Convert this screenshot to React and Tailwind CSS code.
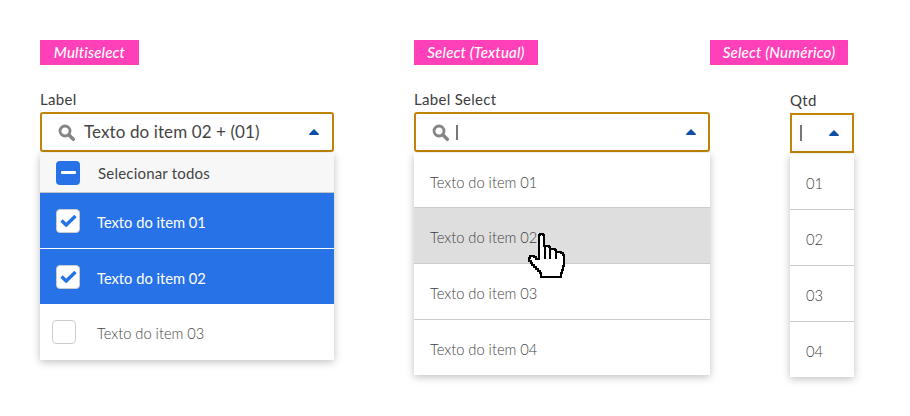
import React from 'react'

const font = "font-['Lato','Open_Sans',sans-serif]"

function Tag({ children, className }) {
  return (
    <div className={`h-[25px] flex items-center justify-center bg-[#ff40b8] text-white italic font-medium text-[15px] tracking-[0.2px] ${className}`}>
      {children}
    </div>
  )
}

function SearchIcon() {
  return (
    <svg width="17" height="17" viewBox="0 0 17 17" fill="none" className="shrink-0">
      <circle cx="7" cy="7" r="5" stroke="#858585" strokeWidth="2.8" />
      <path d="M10.8 10.8 L15.3 15.3" stroke="#858585" strokeWidth="3.4" strokeLinecap="round" />
    </svg>
  )
}

function Caret() {
  return (
    <svg width="10" height="6" viewBox="0 0 10 6" className="shrink-0">
      <path d="M5 0 L10 5 Q10 6 9 6 H1 Q0 6 0 5 Z" fill="#0f4fa8" />
    </svg>
  )
}

function Box({ checked }) {
  return (
    <div className="w-6 h-6 rounded-[4px] bg-white border border-[#cccccc] flex items-center justify-center">
      {checked && (
        <svg width="17" height="13" viewBox="0 0 17 13" fill="none">
          <path d="M1.5 6.5 L6.2 11 L15.5 2" stroke="#2872e8" strokeWidth="3.4" />
        </svg>
      )}
    </div>
  )
}

function CheckRow({ text, checked }) {
  return (
    <div className={`flex items-center ${checked ? 'h-[55px] bg-[#2872e8] text-white pl-4' : 'h-14 bg-white text-[#444444] pl-3'}`}>
      <Box checked={checked} />
      <span className={`pt-[3px] text-[14.7px] ${checked ? 'ml-[17px]' : 'ml-[21px] font-light'}`}>{text}</span>
    </div>
  )
}

function Multi() {
  return (
    <div className="w-[294px]">
      <Tag className="w-[99px]">Multiselect</Tag>
      <div className="mt-[25px] text-[15px] tracking-[0.3px] leading-[18px] text-[#3d3d3d]">Label</div>
      <div className="mt-[4px] h-10 border-2 border-[#c08508] rounded-[3px] flex items-center pl-[16px] pr-[13px] bg-white">
        <SearchIcon />
        <span className="ml-[9px] text-[17px] tracking-[0.1px] text-[#444444] flex-1">Texto do item 02 + (01)</span>
        <Caret />
      </div>
      <div className="mt-px shadow-[0_2px_8px_rgba(0,0,0,0.25)]">
        <div className="h-10 bg-[#f7f7f7] border-b border-[#c4c4c4] flex items-center pl-4">
          <div className="w-6 h-6 rounded-[4px] bg-[#2872e8] flex items-center justify-center">
            <div className="w-[15px] h-[3px] bg-white rounded-[1px]" />
          </div>
          <span className="ml-[18px] pt-px text-[15px] tracking-[0.2px] text-[#444444]">Selecionar todos</span>
        </div>
        <CheckRow text="Texto do item 01" checked />
        <div className="h-px bg-white" />
        <CheckRow text="Texto do item 02" checked />
        <CheckRow text="Texto do item 03" />
      </div>
    </div>
  )
}

function Row({ children, active, first, height }) {
  return (
    <div className={`flex items-center pl-4 pt-1 text-[14.7px] font-light text-[#3f3f3f] ${height || 'h-14'} ${first ? '' : 'border-t border-[#cccccc]'} ${active ? 'bg-[#dedede]' : 'bg-white'}`}>
      {children}
    </div>
  )
}

function Textual() {
  return (
    <div className="w-[296px] ml-20 relative">
      <Tag className="w-[124px]">Select (Textual)</Tag>
      <div className="mt-[25px] text-[15px] tracking-[0.3px] leading-[18px] text-[#3d3d3d]">Label Select</div>
      <div className="mt-[4px] h-10 border-2 border-[#c08508] rounded-[3px] flex items-center pl-[16px] pr-[12px] bg-white">
        <SearchIcon />
        <div className="ml-[7px] w-[1.5px] h-[15px] bg-[#777777]" />
        <div className="flex-1" />
        <Caret />
      </div>
      <div className="mt-px shadow-[0_2px_8px_rgba(0,0,0,0.25)]">
        <Row first height="h-[54px]">Texto do item 01</Row>
        <Row active>Texto do item 02</Row>
        <Row>Texto do item 03</Row>
        <Row>Texto do item 04</Row>
      </div>
      <HandCursor />
    </div>
  )
}

function Numeric() {
  return (
    <div>
      <Tag className="w-[138px]">Select (Numérico)</Tag>
      <div className="ml-20 w-16">
        <div className="mt-[26px] text-[15px] tracking-[0.3px] leading-[18px] text-[#3d3d3d]">Qtd</div>
        <div className="mt-[4px] h-10 border-2 border-[#c08508] flex items-center pl-[8px] pr-[13px] bg-white">
          <div className="w-[1.5px] h-4 bg-[#777777]" />
          <div className="flex-1" />
          <Caret />
        </div>
        <div className="mt-px shadow-[0_2px_8px_rgba(0,0,0,0.25)]">
          <Row first height="h-[55px]">01</Row>
          <Row>02</Row>
          <Row>03</Row>
          <Row>04</Row>
        </div>
      </div>
    </div>
  )
}

function HandCursor() {
  return (
    <svg width="40" height="50" viewBox="0 0 40 50" shapeRendering="crispEdges" className="absolute left-[113px] top-[191px]">
      <path
        d="M13 3 H16 V4 H17 V15 H22 V16 H23 V18 H28 V19 H29 V21 H34 V22 H36 V24 H37 V35 H36 V39 H35 V42 H34 V46 H14 V42 H13 V40 H11 V38 H9 V36 H7 V34 H5 V32 H4 V30 H2 V27 H3 V25 H7 V26 H9 V28 H12 V4 H13 Z"
        fill="#ffffff"
        stroke="#000000"
        strokeWidth="2"
      />
      <path d="M18 16 V28 M23 18 V28 M29 21 V28" stroke="#000000" strokeWidth="1.4" fill="none" />
    </svg>
  )
}

export default function App() {
  return (
    <div className={`${font} w-[910px] h-[416px] bg-white pt-10 pl-10 flex items-start overflow-hidden`}>
      <Multi />
      <Textual />
      <Numeric />
    </div>
  )
}
